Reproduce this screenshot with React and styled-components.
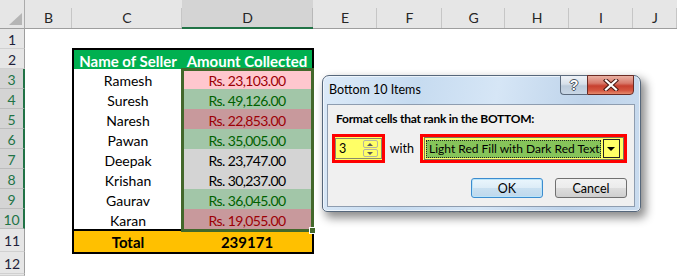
import React from 'react';
import styled, { createGlobalStyle, css } from 'styled-components';

const Global = createGlobalStyle`
  *, *::before, *::after { box-sizing: border-box; }
  html, body { margin: 0; padding: 0; background: #fff; }
  body { width: 677px; height: 276px; overflow: hidden; }
`;

const Page = styled.div`
  position: relative;
  width: 677px;
  height: 276px;
  overflow: hidden;
  font-family: Lato, "Open Sans", sans-serif;
`;

const Sheet = styled.div`
  display: grid;
  grid-template-columns: 25px 47px 110px 131px 64px 65px 63px 64px 64px 1fr;
  grid-template-rows: 29px repeat(10, 20px) 23px 22px 1fr;
  width: 677px;
  height: 276px;
  background: #fff;
`;

const Corner = styled.div`
  grid-column: 1;
  grid-row: 1;
  background: #e6e6e6;
  border-right: 1px solid #ababab;
  border-bottom: 1px solid #9e9e9e;
  display: flex;
  align-items: flex-end;
  justify-content: flex-end;
  padding: 0 2px 3px 0;
`;

const ColHead = styled.div`
  grid-row: 1;
  grid-column: ${(p) => p.$col};
  background: linear-gradient(#c6c6c6, #c6c6c6) right 8px / 1px calc(100% - 8px) no-repeat, #e6e6e6;
  border-bottom: 1px solid #9e9e9e;
  display: flex;
  align-items: center;
  justify-content: center;
  padding-top: 6px;
  font-size: 14px;
  color: #262626;
  ${(p) =>
    p.$selected &&
    css`
      background: linear-gradient(#b8b8b8, #b8b8b8) right 8px / 1px calc(100% - 8px) no-repeat, #d4d4d4;
      border-bottom: 2px solid #217346;
      padding-top: 7px;
    `}
`;

const RowHead = styled.div`
  grid-column: 1;
  grid-row: ${(p) => p.$row};
  background: #e6e6e6;
  border-right: 1px solid #9e9e9e;
  border-bottom: 1px solid #d0d0d0;
  display: flex;
  align-items: center;
  justify-content: center;
  padding-top: 1px;
  font-size: 14px;
  color: #1f1f3a;
  ${(p) =>
    p.$selected &&
    css`
      background: #d4d4d4;
      border-right: 2px solid #217346;
      color: #217346;
      border-bottom-color: #bcbcbc;
    `}
`;

const Table = styled.div`
  grid-column: 3 / 5;
  grid-row: 3 / 13;
  margin: -1px -1px -2px 0;
  border: 2px solid #000;
  display: grid;
  grid-template-columns: 108px 1fr;
  grid-template-rows: 19px repeat(8, 20px) 1fr;
`;

const HeadCell = styled.div`
  background: #00b050;
  color: #fff;
  font-weight: 700;
  font-size: 15px;
  display: flex;
  align-items: center;
  justify-content: center;
  padding-top: 2px;
  white-space: nowrap;
`;

const NameCell = styled.div`
  background: #fff;
  color: #000;
  font-size: 14px;
  display: flex;
  align-items: center;
  justify-content: center;
  padding-top: 3px;
`;

const tones = {
  active: { bg: '#ffc7ce', fg: '#9c0006' },
  green: { bg: '#a2c6a8', fg: '#006100' },
  red: { bg: '#c8999c', fg: '#9c0006' },
  gray: { bg: '#d4d4d4', fg: '#000' },
};

const AmountCell = styled.div`
  background: ${(p) => tones[p.$tone].bg};
  color: ${(p) => tones[p.$tone].fg};
  font-size: 14px;
  letter-spacing: -0.6px;
  display: flex;
  align-items: center;
  justify-content: center;
  padding-top: 3px;
`;

const TotalCell = styled.div`
  background: #ffc000;
  border-top: 2px solid #000;
  color: #000;
  font-weight: 700;
  font-size: 15px;
  display: flex;
  align-items: center;
  justify-content: center;
  padding-top: 1px;
`;

const Selection = styled.div`
  grid-column: 4;
  grid-row: 4 / 12;
  margin: -1px -1px -3px -1px;
  border: 3px solid #43682b;
  position: relative;
  pointer-events: none;
  &::after {
    content: '';
    position: absolute;
    right: -5px;
    bottom: -5px;
    width: 7px;
    height: 7px;
    background: #43682b;
    border: 1px solid #fff;
  }
`;

/* ---------- Dialog ---------- */

const Dialog = styled.div`
  position: absolute;
  left: 322px;
  top: 75px;
  width: 319px;
  height: 137px;
  display: flex;
  flex-direction: column;
  border: 1px solid #56677b;
  border-radius: 7px 7px 5px 5px;
  background: linear-gradient(100deg, #dceaf8 0%, #c6dbf0 28%, #d6e6f6 52%, #bed3ea 78%, #cadcef 100%);
  box-shadow: inset 0 0 0 1px rgba(255, 255, 255, 0.6), 4px 5px 10px 1px rgba(0, 0, 0, 0.45);
  font-family: Lato, "Open Sans", sans-serif;
  color: #000;
`;

const TitleBar = styled.div`
  height: 28px;
  display: flex;
  align-items: flex-start;
  padding: 0 6px 0 6px;
`;

const Title = styled.div`
  flex: 1;
  font-size: 12.5px;
  line-height: 16px;
  margin-top: 6px;
`;

const CaptionButton = styled.div`
  margin-top: -1px;
  height: 20px;
  display: flex;
  align-items: center;
  justify-content: center;
  border: 1px solid #5c6b7e;
  ${(p) =>
    p.$kind === 'help'
      ? css`
          width: 27px;
          border-right: none;
          border-radius: 0 0 0 4px;
          background: linear-gradient(#eef2f7 0%, #d7e0ea 45%, #bccbdb 55%, #c9d7e6 100%);
          font-family: "Liberation Sans", sans-serif;
          font-weight: 700;
          font-size: 14px;
          color: #fff;
          text-shadow: -1px 0 #4a5460, 1px 0 #4a5460, 0 -1px #4a5460, 0 1px #4a5460;
        `
      : css`
          width: 47px;
          border-color: #6a2b24;
          border-radius: 0 0 4px 0;
          background: linear-gradient(#eab1a3 0%, #d8796b 40%, #c7402f 55%, #d4553f 80%, #e58a6c 100%);
        `}
`;

const Panel = styled.div`
  flex: 1;
  margin: 0 5px 4px 4px;
  background: #f0f0f0;
  border: 1px solid #8e9db0;
  display: flex;
  flex-direction: column;
  padding: 6px 7px 8px 4px;
`;

const Prompt = styled.div`
  font-size: 12px;
  font-weight: 700;
  letter-spacing: -0.25px;
  line-height: 16px;
  padding-left: 4px;
  white-space: nowrap;
`;

const ControlsRow = styled.div`
  margin-top: 7px;
  display: flex;
  align-items: center;
`;

const Highlight = styled.div`
  width: ${(p) => p.$w}px;
  height: 29px;
  border: 3px solid #ff0000;
  background: #ffff66;
  display: flex;
  align-items: center;
`;

const SpinInput = styled.div`
  flex: 1;
  height: 21px;
  border: 1px solid #8a8a6a;
  display: flex;
  align-items: center;
  padding: 0 3px 0 3px;
  font-size: 12.5px;
`;

const SpinValue = styled.span`
  flex: 1;
`;

const Spinner = styled.div`
  width: 15px;
  height: 17px;
  display: flex;
  flex-direction: column;
  gap: 1px;
`;

const SpinBtn = styled.div`
  flex: 1;
  border: 1px solid #b5b5a0;
  border-radius: 2px;
  display: flex;
  align-items: center;
  justify-content: center;
  &::before {
    content: '';
    border-left: 3px solid transparent;
    border-right: 3px solid transparent;
    ${(p) => (p.$dir === 'up' ? 'border-bottom: 3px solid #5a5a5a;' : 'border-top: 3px solid #5a5a5a;')}
  }
`;

const With = styled.span`
  font-size: 12.5px;
  margin: 0 6px 0 5px;
`;

const Combo = styled.div`
  flex: 1;
  height: 23px;
  margin: 0 1px;
  border: 1px solid #7a7a5a;
  display: flex;
  align-items: center;
  padding: 0 3px 0 1px;
  gap: 2px;
`;

const ComboValue = styled.div`
  flex: 1;
  height: 18px;
  background: #86c45a;
  border: 1px dotted #222;
  font-size: 12px;
  line-height: 16px;
  padding-left: 2px;
  white-space: nowrap;
  overflow: hidden;
`;

const ComboArrow = styled.div`
  width: 17px;
  height: 19px;
  border: 1px solid #222;
  background: #ffff66;
  display: flex;
  align-items: center;
  justify-content: center;
  &::before {
    content: '';
    border-left: 4px solid transparent;
    border-right: 4px solid transparent;
    border-top: 4px solid #000;
  }
`;

const ButtonRow = styled.div`
  margin-top: auto;
  display: flex;
  justify-content: flex-end;
  gap: 12px;
`;

const Button = styled.div`
  width: 72px;
  height: 20px;
  border: 1px solid #707070;
  border-radius: 3px;
  background: linear-gradient(#f2f2f2 0%, #ebebeb 50%, #dddddd 51%, #cfcfcf 100%);
  display: flex;
  align-items: center;
  justify-content: center;
  font-size: 12.5px;
  ${(p) =>
    p.$default &&
    css`
      border-color: #3c8ccf;
      box-shadow: inset 0 0 0 1px #b9e4f9;
      background: linear-gradient(#eaf6fd 0%, #dcecf7 50%, #c9e0f1 51%, #bfd8ec 100%);
    `}
`;

const cols = ['B', 'C', 'D', 'E', 'F', 'G', 'H', 'I', 'J'];

const rows = [
  ['Ramesh', 'Rs. 23,103.00', 'active'],
  ['Suresh', 'Rs. 49,126.00', 'green'],
  ['Naresh', 'Rs. 22,853.00', 'red'],
  ['Pawan', 'Rs. 35,005.00', 'green'],
  ['Deepak', 'Rs. 23,747.00', 'gray'],
  ['Krishan', 'Rs. 30,237.00', 'gray'],
  ['Gaurav', 'Rs. 36,045.00', 'green'],
  ['Karan', 'Rs. 19,055.00', 'red'],
];

export default function App() {
  return (
    <Page>
      <Global />
      <Sheet>
        <Corner>
          <svg width="13" height="12" viewBox="0 0 13 12">
            <polygon points="13,0 13,12 0,12" fill="#b5b5b5" />
          </svg>
        </Corner>
        {cols.map((c, i) => (
          <ColHead key={c} $col={i + 2} $selected={c === 'D'}>
            {c}
          </ColHead>
        ))}
        {Array.from({ length: 13 }, (_, i) => (
          <RowHead key={i} $row={i + 2} $selected={i + 1 >= 3 && i + 1 <= 10}>
            {i + 1 <= 12 ? i + 1 : ''}
          </RowHead>
        ))}
        <Table>
          <HeadCell>Name of Seller</HeadCell>
          <HeadCell>Amount Collected</HeadCell>
          {rows.map(([name, amt, tone]) => (
            <React.Fragment key={name}>
              <NameCell>{name}</NameCell>
              <AmountCell $tone={tone}>{amt}</AmountCell>
            </React.Fragment>
          ))}
          <TotalCell>Total</TotalCell>
          <TotalCell>239171</TotalCell>
        </Table>
        <Selection />
      </Sheet>

      <Dialog>
        <TitleBar>
          <Title>Bottom 10 Items</Title>
          <CaptionButton $kind="help">?</CaptionButton>
          <CaptionButton $kind="close">
            <svg width="16" height="12" viewBox="0 0 16 12">
              <path d="M3 1.5 L13 10.5 M13 1.5 L3 10.5" stroke="#4a1a14" strokeWidth="4.2" strokeLinecap="square" />
              <path d="M3 1.5 L13 10.5 M13 1.5 L3 10.5" stroke="#fff" strokeWidth="2.2" strokeLinecap="square" />
            </svg>
          </CaptionButton>
        </TitleBar>
        <Panel>
          <Prompt>Format cells that rank in the BOTTOM:</Prompt>
          <ControlsRow>
            <Highlight $w={61}>
              <SpinInput>
                <SpinValue>3</SpinValue>
                <Spinner>
                  <SpinBtn $dir="up" />
                  <SpinBtn $dir="down" />
                </Spinner>
              </SpinInput>
            </Highlight>
            <With>with</With>
            <Highlight $w={207}>
              <Combo>
                <ComboValue>Light Red Fill with Dark Red Text</ComboValue>
                <ComboArrow />
              </Combo>
            </Highlight>
          </ControlsRow>
          <ButtonRow>
            <Button $default>OK</Button>
            <Button>Cancel</Button>
          </ButtonRow>
        </Panel>
      </Dialog>
    </Page>
  );
}
